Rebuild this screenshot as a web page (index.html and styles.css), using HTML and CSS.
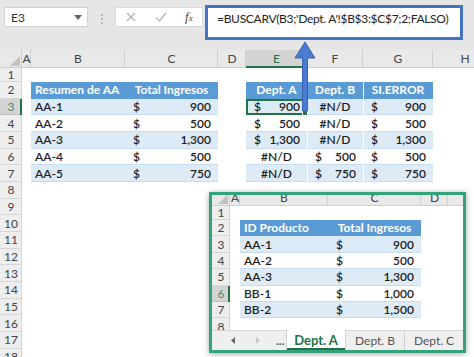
FILE: index.html
```html
<!DOCTYPE html>
<html lang="es">
<head>
  <meta charset="UTF-8">
  <meta name="viewport" content="width=device-width, initial-scale=1.0">
  <title>BUSCARV entre hojas</title>
  <link rel="stylesheet" href="styles.css">
</head>
<body>

<div class="app">
  <div class="formula-bar">
    <div class="name-box">
      <span>E3</span>
      <svg class="caret" width="8" height="5" viewBox="0 0 8 5"><path d="M0 0h8L4 5z"/></svg>
    </div>
    <div class="grip"><i></i><i></i><i></i></div>
    <div class="fx-box">
      <svg class="x" width="10" height="10" viewBox="0 0 10 10"><path d="M1 1l8 8M9 1l-8 8"/></svg>
      <svg class="ok" width="12" height="10" viewBox="0 0 12 10"><path d="M1 5.5l3.5 3.5L11 1"/></svg>
      <span class="fx">f<small>x</small></span>
    </div>
    <div class="formula">=BUSCARV(B3;'Dept. A'!$B$3:$C$7;2;FALSO)</div>
  </div>

  <table class="sheet main">
    <colgroup>
      <col style="width:22px"><col style="width:9px"><col style="width:94px"><col style="width:93px">
      <col style="width:28px"><col style="width:61px"><col style="width:56px"><col style="width:70px"><col style="width:64px">
    </colgroup>
    <tr class="hdr">
      <th class="corner"><svg width="10" height="10" viewBox="0 0 10 10"><path d="M10 0v10H0z"/></svg></th>
      <th class="ch">A</th><th class="ch">B</th><th class="ch">C</th><th class="ch">D</th>
      <th class="ch on">E</th><th class="ch">F</th><th class="ch">G</th><th class="ch">H</th>
    </tr>
    <tr class="r1"><th class="rh">1</th><td></td><td></td><td></td><td></td><td></td><td></td><td></td><td></td></tr>
    <tr>
      <th class="rh">2</th><td></td>
      <td class="th left">Resumen de AA</td><td class="th">Total Ingresos</td><td></td>
      <td class="th">Dept. A</td><td class="th sep">Dept. B</td><td class="th sep">SI.ERROR</td><td></td>
    </tr>
    <tr class="band">
      <th class="rh on">3</th><td></td>
      <td class="tb">AA-1</td><td class="tb"><div class="m"><span>$</span><span>900</span></div></td><td></td>
      <td class="tb sel"><div class="m"><span>$</span><span>900</span></div></td>
      <td class="tb sep c">#N/D</td>
      <td class="tb sep"><div class="m"><span>$</span><span>900</span></div></td><td></td>
    </tr>
    <tr>
      <th class="rh">4</th><td></td>
      <td class="tb">AA-2</td><td class="tb"><div class="m"><span>$</span><span>500</span></div></td><td></td>
      <td class="tb"><div class="m"><span>$</span><span>500</span></div></td>
      <td class="tb sep c">#N/D</td>
      <td class="tb sep"><div class="m"><span>$</span><span>500</span></div></td><td></td>
    </tr>
    <tr class="band">
      <th class="rh">5</th><td></td>
      <td class="tb">AA-3</td><td class="tb"><div class="m"><span>$</span><span>1,300</span></div></td><td></td>
      <td class="tb"><div class="m"><span>$</span><span>1,300</span></div></td>
      <td class="tb sep c">#N/D</td>
      <td class="tb sep"><div class="m"><span>$</span><span>1,300</span></div></td><td></td>
    </tr>
    <tr>
      <th class="rh">6</th><td></td>
      <td class="tb">AA-4</td><td class="tb"><div class="m"><span>$</span><span>500</span></div></td><td></td>
      <td class="tb c">#N/D</td>
      <td class="tb sep"><div class="m"><span>$</span><span>500</span></div></td>
      <td class="tb sep"><div class="m"><span>$</span><span>500</span></div></td><td></td>
    </tr>
    <tr class="band">
      <th class="rh">7</th><td></td>
      <td class="tb">AA-5</td><td class="tb"><div class="m"><span>$</span><span>750</span></div></td><td></td>
      <td class="tb c">#N/D</td>
      <td class="tb sep"><div class="m"><span>$</span><span>750</span></div></td>
      <td class="tb sep"><div class="m"><span>$</span><span>750</span></div></td><td></td>
    </tr>
    <tr><th class="rh">8</th><td></td><td></td><td></td><td></td><td></td><td></td><td></td><td></td></tr>
    <tr><th class="rh">9</th><td></td><td></td><td></td><td></td><td></td><td></td><td></td><td></td></tr>
    <tr><th class="rh">10</th><td></td><td></td><td></td><td></td><td></td><td></td><td></td><td></td></tr>
    <tr><th class="rh">11</th><td></td><td></td><td></td><td></td><td></td><td></td><td></td><td></td></tr>
    <tr><th class="rh">12</th><td></td><td></td><td></td><td></td><td></td><td></td><td></td><td></td></tr>
    <tr><th class="rh">13</th><td></td><td></td><td></td><td></td><td></td><td></td><td></td><td></td></tr>
    <tr><th class="rh">14</th><td></td><td></td><td></td><td></td><td></td><td></td><td></td><td></td></tr>
    <tr><th class="rh">15</th><td></td><td></td><td></td><td></td><td></td><td></td><td></td><td></td></tr>
    <tr><th class="rh">16</th><td></td><td></td><td></td><td></td><td></td><td></td><td></td><td></td></tr>
    <tr><th class="rh">17</th><td></td><td></td><td></td><td></td><td></td><td></td><td></td><td></td></tr>
    <tr><th class="rh">18</th><td></td><td></td><td></td><td></td><td></td><td></td><td></td><td></td></tr>
  </table>

  <!-- arrow from E3 up to the formula -->
  <svg class="arrow" width="24" height="75" viewBox="0 0 24 75">
    <path d="M12 2L22 18H14.5V71H9.5V18H2Z"/>
  </svg>

  <!-- sheet "Dept. A" window -->
  <div class="window">
    <div class="window-view">
      <table class="sheet mini">
        <colgroup>
          <col style="width:18px"><col style="width:10px"><col style="width:88px"><col style="width:93px">
          <col style="width:27px"><col style="width:60px">
        </colgroup>
        <tr class="hdr">
          <th class="corner"><svg width="10" height="10" viewBox="0 0 10 10"><path d="M10 0v10H0z"/></svg></th>
          <th class="ch">A</th><th class="ch">B</th><th class="ch">C</th><th class="ch">D</th><th class="ch"></th>
        </tr>
        <tr class="r1"><th class="rh">1</th><td></td><td></td><td></td><td></td><td></td></tr>
        <tr>
          <th class="rh">2</th><td></td>
          <td class="th left">ID Producto</td><td class="th">Total Ingresos</td><td></td><td></td>
        </tr>
        <tr class="band">
          <th class="rh">3</th><td></td>
          <td class="tb">AA-1</td><td class="tb"><div class="m"><span>$</span><span>900</span></div></td><td></td><td></td>
        </tr>
        <tr>
          <th class="rh">4</th><td></td>
          <td class="tb">AA-2</td><td class="tb"><div class="m"><span>$</span><span>500</span></div></td><td></td><td></td>
        </tr>
        <tr class="band">
          <th class="rh">5</th><td></td>
          <td class="tb">AA-3</td><td class="tb"><div class="m"><span>$</span><span>1,300</span></div></td><td></td><td></td>
        </tr>
        <tr>
          <th class="rh on">6</th><td></td>
          <td class="tb">BB-1</td><td class="tb"><div class="m"><span>$</span><span>1,000</span></div></td><td></td><td></td>
        </tr>
        <tr class="band">
          <th class="rh">7</th><td></td>
          <td class="tb">BB-2</td><td class="tb"><div class="m"><span>$</span><span>1,500</span></div></td><td></td><td></td>
        </tr>
        <tr><th class="rh">8</th><td></td><td></td><td></td><td></td><td></td></tr>
      </table>
    </div>
    <div class="tabs">
      <div class="tab-nav">
        <svg class="prev" width="4" height="7" viewBox="0 0 4 7"><path d="M4 0v7L0 3.5z"/></svg>
        <svg class="next" width="4" height="7" viewBox="0 0 4 7"><path d="M0 0v7l4-3.5z"/></svg>
        <span class="more">...</span>
      </div>
      <div class="tab active">Dept. A</div>
      <div class="tab">Dept. B</div>
      <div class="tab">Dept. C</div>
    </div>
  </div>
</div>

</body>
</html>
```

FILE: styles.css
```css
* {
  box-sizing: border-box;
}

body {
  margin: 0;
  background-color: #fff;
  font-family: Lato, 'Liberation Sans', sans-serif;
  color: #222;
}

.app {
  position: relative;
  width: 474px;
  height: 357px;
  overflow: hidden;
}

/* formula bar */
.formula-bar {
  height: 50px;
  background-color: #e6e6e6;
  display: flex;
  align-items: flex-start;
  padding: 5px 0 0 4px;
}

.name-box {
  width: 84px;
  height: 20px;
  margin-top: 2px;
  background-color: #fff;
  border: 1px solid #d4d4d4;
  display: flex;
  align-items: center;
  justify-content: space-between;
  padding: 0 5px 0 6px;
  font-size: 12px;
  color: #333;
}

.caret {
  fill: #666;
}

.grip {
  width: 27px;
  display: flex;
  flex-direction: column;
  align-items: center;
  gap: 2px;
  padding-top: 9px;
}

.grip i {
  width: 2px;
  height: 2px;
  background-color: #b8b8b8;
}

.fx-box {
  width: 88px;
  height: 20px;
  margin-top: 2px;
  background-color: #fff;
  border: 1px solid #dadada;
  display: flex;
  align-items: center;
  padding-left: 10px;
}

.fx-box svg {
  fill: none;
  stroke: #b4b4b4;
  stroke-width: 1.3;
}

.fx-box .ok {
  margin-left: 19px;
}

.fx {
  margin-left: 18px;
  font-family: 'Liberation Serif', serif;
  font-style: italic;
  font-size: 13px;
  color: #444;
}

.fx small {
  font-size: 9px;
}

.formula {
  width: 258px;
  height: 35px;
  margin-left: 2px;
  background-color: #fff;
  border: 3px solid #4472c4;
  padding: 3px 0 0 9px;
  font-size: 12px;
  letter-spacing: -0.3px;
  color: #222;
  white-space: nowrap;
}

/* grid */
.sheet {
  border-collapse: collapse;
  table-layout: fixed;
  font-size: 12px;
}

.main {
  width: 497px;
}

.sheet tr {
  height: 16.67px;
}

.sheet tr.hdr {
  height: 18px;
}

.sheet tr.r1 {
  height: 13px;
}

.sheet th,
.sheet td {
  padding: 0 4px;
  line-height: 14px;
  white-space: nowrap;
  overflow: hidden;
}

.corner {
  background-color: #e9e9e9;
  text-align: right;
  vertical-align: bottom;
  box-shadow: inset -1px -1px #cfcfcf;
  padding: 0 2px 2px 0 !important;
}

.corner svg {
  display: block;
  margin-left: auto;
  fill: #c2c2c2;
}

.sheet .ch {
  padding: 0;
  background-color: #e9e9e9;
  font-weight: normal;
  color: #444;
  text-align: center;
  box-shadow: inset -1px -1px #cfcfcf;
}

.ch.on {
  background-color: #d4d4d4;
  color: #217346;
  box-shadow: inset -1px 0 #bdbdbd, inset 0 -2px #217346;
}

.rh {
  background-color: #eeeeee;
  font-weight: normal;
  color: #444;
  text-align: center;
  padding: 0 !important;
  box-shadow: inset -1px -1px #d6d6d6;
}

.rh.on {
  background-color: #d4d4d4;
  color: #4d8a67;
  box-shadow: inset -2px 0 #217346, inset 0 -1px #bdbdbd;
}

/* excel tables */
.th {
  background-color: #5b9bd5;
  color: #fff;
  font-weight: bold;
  text-align: center;
}

.th.left {
  text-align: left;
}

.th.sep {
  box-shadow: inset 1px 0 #fff;
}

.tb {
  font-weight: 600;
  color: #1e1e1e;
  box-shadow: inset 0 -1px #c6dcf0;
}

.band .tb {
  background-color: #ddebf7;
}

.tb.sep {
  box-shadow: inset 1px 0 #fff, inset 0 -1px #c6dcf0;
}

.tb.c {
  text-align: center;
}

.m {
  display: flex;
  justify-content: space-between;
  padding: 0 3px 0 4px;
}

.sel {
  position: relative;
  outline: 2px solid #217346;
  outline-offset: -2px;
}

.sel::after {
  content: '';
  position: absolute;
  right: -3px;
  bottom: -3px;
  width: 6px;
  height: 6px;
  background-color: #217346;
  border: 1px solid #fff;
}

.arrow {
  position: absolute;
  left: 293px;
  top: 40px;
  fill: #4a7bd0;
  stroke: #3a64b3;
  stroke-width: 1;
}

/* second sheet window */
.window {
  position: absolute;
  left: 209px;
  top: 192px;
  width: 257px;
  height: 161px;
  border: 3px solid #33a37b;
  background-color: #fff;
  box-shadow: 0 1px 6px rgba(0, 0, 0, 0.35);
  display: flex;
  flex-direction: column;
}

.window-view {
  flex: 1;
  overflow: hidden;
}

.mini {
  width: 296px;
  margin-top: -5px;
}

.mini tr {
  height: 16.4px;
}

.sheet.mini tr.hdr {
  height: 16px;
}

.tabs {
  height: 20px;
  display: flex;
  background-color: #efefef;
  border-top: 1px solid #d6d6d6;
  font-size: 12px;
}

.tab-nav {
  width: 81px;
  display: flex;
  align-items: center;
  padding-left: 19px;
}

.prev {
  fill: #666;
}

.next {
  fill: #c8c8c8;
  margin-left: 21px;
}

.more {
  margin-left: 16px;
  color: #555;
  font-weight: bold;
}

.tab {
  width: 59px;
  flex-shrink: 0;
  display: flex;
  align-items: center;
  justify-content: center;
  color: #555;
  border-left: 1px solid #d0d0d0;
}

.tab.active {
  background-color: #fff;
  color: #217346;
  font-weight: bold;
  font-size: 13px;
  margin-top: -1px;
  box-shadow: inset 0 -2px #217346;
}
```
